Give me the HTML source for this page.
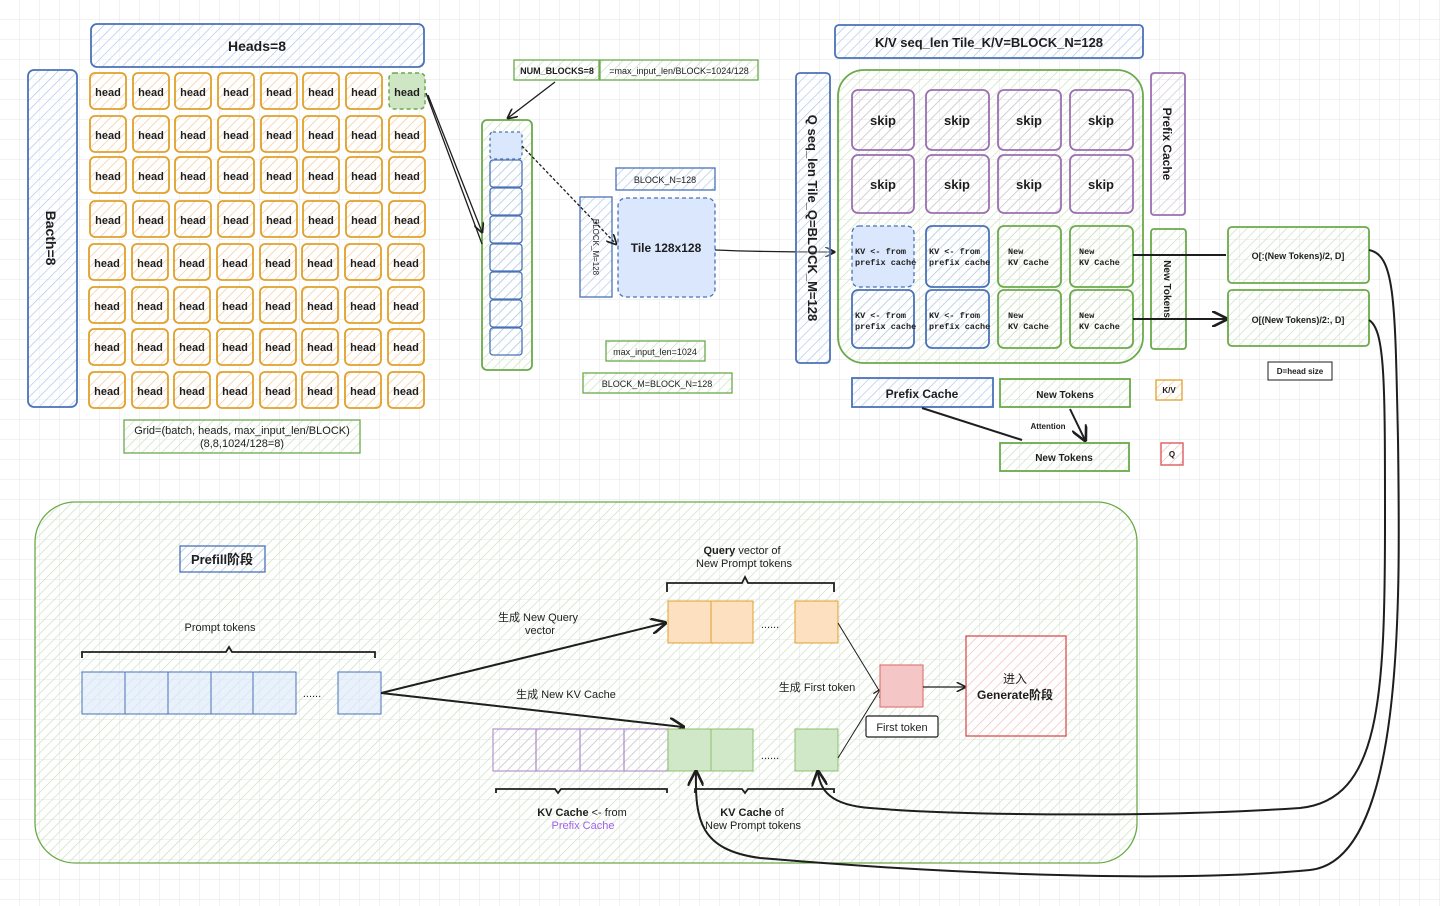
<!DOCTYPE html><html><head><meta charset="utf-8"><style>
html,body{margin:0;padding:0;background:#fff;}
svg{display:block;font-family:"Liberation Sans","Noto Sans CJK SC",sans-serif;}
text{fill:#1e1e1e;}
</style></head><body>
<svg width="1440" height="906" viewBox="0 0 1440 906" xmlns="http://www.w3.org/2000/svg">
<defs>
<pattern id="grid" width="20" height="20" patternUnits="userSpaceOnUse"><path d="M20 0V20M0 20H20" stroke="#e6e6e6" stroke-width="1" fill="none"/></pattern>
<pattern id="hb" width="7" height="7" patternUnits="userSpaceOnUse" patternTransform="rotate(45)"><rect width="7" height="7" fill="#fff" fill-opacity="0.3"/><line x1="0" y1="0" x2="0" y2="7" stroke="#a9c4ee" stroke-width="1.3"/></pattern>
<pattern id="ho" width="7" height="7" patternUnits="userSpaceOnUse" patternTransform="rotate(45)"><rect width="7" height="7" fill="#fff"/><line x1="0" y1="0" x2="0" y2="7" stroke="#f7c898" stroke-width="1.4"/></pattern>
<pattern id="hg" width="7" height="7" patternUnits="userSpaceOnUse" patternTransform="rotate(45)"><line x1="0" y1="0" x2="0" y2="7" stroke="#c6e0b8" stroke-width="1.3"/></pattern>
<pattern id="hp" width="7" height="7" patternUnits="userSpaceOnUse" patternTransform="rotate(45)"><line x1="0" y1="0" x2="0" y2="7" stroke="#cfc6d6" stroke-width="1.4"/></pattern>
<pattern id="hr" width="7" height="7" patternUnits="userSpaceOnUse" patternTransform="rotate(45)"><rect width="7" height="7" fill="#fff"/><line x1="0" y1="0" x2="0" y2="7" stroke="#f2b8b8" stroke-width="1.3"/></pattern>
<marker id="ar" markerWidth="8" markerHeight="8" refX="7" refY="4" orient="auto"><path d="M0 0L8 4L0 8" fill="none" stroke="#1e1e1e" stroke-width="1.3"/></marker>
</defs>
<rect width="1440" height="906" fill="url(#grid)"/>

<!-- Heads -->
<rect x="91" y="24" width="333" height="43" rx="6" fill="url(#hb)" stroke="#4a72b8" stroke-width="1.8"/>
<text x="257" y="51" text-anchor="middle" font-size="14" font-weight="bold">Heads=8</text>
<rect x="28" y="70" width="49" height="337" rx="6" fill="url(#hb)" stroke="#4a72b8" stroke-width="1.8"/>
<text transform="translate(46,238) rotate(90)" text-anchor="middle" font-size="14" font-weight="bold">Bacth=8</text>

<g stroke="#e0a02a" stroke-width="1.8" fill="url(#ho)">
<rect x="90" y="73" width="36" height="36" rx="5"/><rect x="133" y="73" width="36" height="36" rx="5"/><rect x="175" y="73" width="36" height="36" rx="5"/><rect x="218" y="73" width="36" height="36" rx="5"/><rect x="261" y="73" width="36" height="36" rx="5"/><rect x="303" y="73" width="36" height="36" rx="5"/><rect x="346" y="73" width="36" height="36" rx="5"/>
<rect x="90" y="116" width="36" height="36" rx="5"/><rect x="133" y="116" width="36" height="36" rx="5"/><rect x="175" y="116" width="36" height="36" rx="5"/><rect x="218" y="116" width="36" height="36" rx="5"/><rect x="261" y="116" width="36" height="36" rx="5"/><rect x="303" y="116" width="36" height="36" rx="5"/><rect x="346" y="116" width="36" height="36" rx="5"/><rect x="389" y="116" width="36" height="36" rx="5"/>
<rect x="90" y="157" width="36" height="36" rx="5"/><rect x="133" y="157" width="36" height="36" rx="5"/><rect x="175" y="157" width="36" height="36" rx="5"/><rect x="218" y="157" width="36" height="36" rx="5"/><rect x="261" y="157" width="36" height="36" rx="5"/><rect x="303" y="157" width="36" height="36" rx="5"/><rect x="346" y="157" width="36" height="36" rx="5"/><rect x="389" y="157" width="36" height="36" rx="5"/>
<rect x="90" y="201" width="36" height="36" rx="5"/><rect x="133" y="201" width="36" height="36" rx="5"/><rect x="175" y="201" width="36" height="36" rx="5"/><rect x="218" y="201" width="36" height="36" rx="5"/><rect x="261" y="201" width="36" height="36" rx="5"/><rect x="303" y="201" width="36" height="36" rx="5"/><rect x="346" y="201" width="36" height="36" rx="5"/><rect x="389" y="201" width="36" height="36" rx="5"/>
<rect x="89" y="244" width="36" height="36" rx="5"/><rect x="132" y="244" width="36" height="36" rx="5"/><rect x="174" y="244" width="36" height="36" rx="5"/><rect x="217" y="244" width="36" height="36" rx="5"/><rect x="260" y="244" width="36" height="36" rx="5"/><rect x="302" y="244" width="36" height="36" rx="5"/><rect x="345" y="244" width="36" height="36" rx="5"/><rect x="388" y="244" width="36" height="36" rx="5"/>
<rect x="89" y="287" width="36" height="36" rx="5"/><rect x="132" y="287" width="36" height="36" rx="5"/><rect x="174" y="287" width="36" height="36" rx="5"/><rect x="217" y="287" width="36" height="36" rx="5"/><rect x="260" y="287" width="36" height="36" rx="5"/><rect x="302" y="287" width="36" height="36" rx="5"/><rect x="345" y="287" width="36" height="36" rx="5"/><rect x="388" y="287" width="36" height="36" rx="5"/>
<rect x="89" y="329" width="36" height="36" rx="5"/><rect x="132" y="329" width="36" height="36" rx="5"/><rect x="174" y="329" width="36" height="36" rx="5"/><rect x="217" y="329" width="36" height="36" rx="5"/><rect x="260" y="329" width="36" height="36" rx="5"/><rect x="302" y="329" width="36" height="36" rx="5"/><rect x="345" y="329" width="36" height="36" rx="5"/><rect x="388" y="329" width="36" height="36" rx="5"/>
<rect x="89" y="372" width="36" height="36" rx="5"/><rect x="132" y="372" width="36" height="36" rx="5"/><rect x="174" y="372" width="36" height="36" rx="5"/><rect x="217" y="372" width="36" height="36" rx="5"/><rect x="260" y="372" width="36" height="36" rx="5"/><rect x="302" y="372" width="36" height="36" rx="5"/><rect x="345" y="372" width="36" height="36" rx="5"/><rect x="388" y="372" width="36" height="36" rx="5"/>
</g>
<rect x="389" y="73" width="36" height="36" rx="5" fill="#cfe6c4" stroke="#6aaa4a" stroke-width="1.5" stroke-dasharray="4 3"/>
<g font-size="11" text-anchor="middle" font-weight="bold">
<text x="108" y="96">head</text><text x="151" y="96">head</text><text x="193" y="96">head</text><text x="236" y="96">head</text><text x="279" y="96">head</text><text x="321" y="96">head</text><text x="364" y="96">head</text><text x="407" y="96">head</text>
<text x="108" y="139">head</text><text x="151" y="139">head</text><text x="193" y="139">head</text><text x="236" y="139">head</text><text x="279" y="139">head</text><text x="321" y="139">head</text><text x="364" y="139">head</text><text x="407" y="139">head</text>
<text x="108" y="180">head</text><text x="151" y="180">head</text><text x="193" y="180">head</text><text x="236" y="180">head</text><text x="279" y="180">head</text><text x="321" y="180">head</text><text x="364" y="180">head</text><text x="407" y="180">head</text>
<text x="108" y="224">head</text><text x="151" y="224">head</text><text x="193" y="224">head</text><text x="236" y="224">head</text><text x="279" y="224">head</text><text x="321" y="224">head</text><text x="364" y="224">head</text><text x="407" y="224">head</text>
<text x="107" y="267">head</text><text x="150" y="267">head</text><text x="192" y="267">head</text><text x="235" y="267">head</text><text x="278" y="267">head</text><text x="320" y="267">head</text><text x="363" y="267">head</text><text x="406" y="267">head</text>
<text x="107" y="310">head</text><text x="150" y="310">head</text><text x="192" y="310">head</text><text x="235" y="310">head</text><text x="278" y="310">head</text><text x="320" y="310">head</text><text x="363" y="310">head</text><text x="406" y="310">head</text>
<text x="107" y="351">head</text><text x="150" y="351">head</text><text x="192" y="351">head</text><text x="235" y="351">head</text><text x="278" y="351">head</text><text x="320" y="351">head</text><text x="363" y="351">head</text><text x="406" y="351">head</text>
<text x="107" y="395">head</text><text x="150" y="395">head</text><text x="192" y="395">head</text><text x="235" y="395">head</text><text x="278" y="395">head</text><text x="320" y="395">head</text><text x="363" y="395">head</text><text x="406" y="395">head</text>
</g>
<rect x="124" y="420" width="236" height="33" fill="url(#hg)" stroke="#6aaa4a" stroke-width="1.3"/>
<text x="242" y="434" text-anchor="middle" font-size="11">Grid=(batch, heads, max_input_len/BLOCK)</text>
<text x="242" y="447" text-anchor="middle" font-size="11">(8,8,1024/128=8)</text>

<!-- blocks column -->
<rect x="514" y="60" width="85" height="20" fill="url(#hg)" stroke="#6aaa4a" stroke-width="1.3"/>
<text x="557" y="74" text-anchor="middle" font-size="9" font-weight="bold">NUM_BLOCKS=8</text>
<rect x="600" y="60" width="158" height="20" fill="url(#hg)" stroke="#6aaa4a" stroke-width="1.3"/>
<text x="679" y="74" text-anchor="middle" font-size="9">=max_input_len/BLOCK=1024/128</text>
<rect x="482" y="120" width="50" height="250" rx="5" fill="url(#hg)" stroke="#6aaa4a" stroke-width="1.8"/>
<g fill="url(#hb)" stroke="#4a72b8" stroke-width="1.3">
<rect x="490" y="160" width="32" height="27" rx="3"/><rect x="490" y="188" width="32" height="27" rx="3"/><rect x="490" y="216" width="32" height="27" rx="3"/><rect x="490" y="244" width="32" height="27" rx="3"/><rect x="490" y="272" width="32" height="27" rx="3"/><rect x="490" y="300" width="32" height="27" rx="3"/><rect x="490" y="328" width="32" height="27" rx="3"/>
</g>
<rect x="490" y="132" width="32" height="27" rx="3" fill="#dbe7fc" stroke="#4a72b8" stroke-width="1.3" stroke-dasharray="3 3"/>
<path d="M555 82L508 118" stroke="#1e1e1e" stroke-width="1.3" marker-end="url(#ar)" fill="none"/>
<path d="M426 93L482 244M428 95L482 232" stroke="#1e1e1e" stroke-width="1.3" marker-end="url(#ar)" fill="none"/>

<rect x="616" y="168" width="99" height="22" fill="url(#hb)" stroke="#4a72b8" stroke-width="1.3"/>
<text x="665" y="183" text-anchor="middle" font-size="9">BLOCK_N=128</text>
<rect x="580" y="197" width="32" height="100" fill="url(#hb)" stroke="#4a72b8" stroke-width="1.3"/>
<text transform="translate(593,247) rotate(90)" text-anchor="middle" font-size="8">BLOCK_M=128</text>
<rect x="618" y="198" width="97" height="99" rx="8" fill="#dbe7fc" stroke="#4a72b8" stroke-width="1.3" stroke-dasharray="4 3"/>
<text x="666" y="252" text-anchor="middle" font-size="12" font-weight="bold">Tile 128x128</text>
<path d="M522 146L616 244" stroke="#1e1e1e" stroke-width="1.3" stroke-dasharray="3 2" marker-end="url(#ar)" fill="none"/>
<path d="M715 250Q760 252 834 252" stroke="#1e1e1e" stroke-width="1.3" marker-end="url(#ar)" fill="none"/>
<rect x="606" y="341" width="99" height="20" fill="url(#hg)" stroke="#6aaa4a" stroke-width="1.3"/>
<text x="655" y="355" text-anchor="middle" font-size="9">max_input_len=1024</text>
<rect x="583" y="373" width="149" height="20" fill="url(#hg)" stroke="#6aaa4a" stroke-width="1.3"/>
<text x="657" y="387" text-anchor="middle" font-size="9">BLOCK_M=BLOCK_N=128</text>

<!-- right matrix -->
<rect x="835" y="25" width="308" height="33" rx="4" fill="url(#hb)" stroke="#4a72b8" stroke-width="1.8"/>
<text x="989" y="47" text-anchor="middle" font-size="13" font-weight="bold">K/V seq_len Tile_K/V=BLOCK_N=128</text>
<rect x="796" y="73" width="34" height="290" rx="4" fill="url(#hb)" stroke="#4a72b8" stroke-width="1.8"/>
<text transform="translate(808,218) rotate(90)" text-anchor="middle" font-size="13" font-weight="bold">Q seq_len Tile_Q=BLOCK_M=128</text>
<rect x="838" y="70" width="305" height="293" rx="26" fill="url(#hg)" stroke="#6aaa4a" stroke-width="1.8"/>
<g fill="url(#hp)" stroke="#9b6fb0" stroke-width="1.8">
<rect x="852" y="90" width="62" height="60" rx="6"/><rect x="926" y="90" width="63" height="60" rx="6"/><rect x="998" y="90" width="63" height="60" rx="6"/><rect x="1070" y="90" width="63" height="60" rx="6"/>
<rect x="852" y="155" width="62" height="58" rx="6"/><rect x="926" y="155" width="63" height="58" rx="6"/><rect x="998" y="155" width="63" height="58" rx="6"/><rect x="1070" y="155" width="63" height="58" rx="6"/>
</g>
<g font-size="13" font-weight="bold" text-anchor="middle">
<text x="883" y="125">skip</text><text x="957" y="125">skip</text><text x="1029" y="125">skip</text><text x="1101" y="125">skip</text>
<text x="883" y="189">skip</text><text x="957" y="189">skip</text><text x="1029" y="189">skip</text><text x="1101" y="189">skip</text>
</g>
<rect x="852" y="226" width="62" height="61" rx="7" fill="#dbe7fc" stroke="#4a72b8" stroke-width="1.3" stroke-dasharray="4 3"/>
<g fill="url(#hb)" stroke="#4a72b8" stroke-width="1.8"><rect x="926" y="226" width="63" height="61" rx="6"/><rect x="852" y="290" width="62" height="58" rx="6"/><rect x="926" y="290" width="63" height="58" rx="6"/></g>
<g fill="url(#hg)" stroke="#6aaa4a" stroke-width="1.8"><rect x="998" y="226" width="63" height="61" rx="6"/><rect x="1070" y="226" width="63" height="61" rx="6"/><rect x="998" y="290" width="63" height="58" rx="6"/><rect x="1070" y="290" width="63" height="58" rx="6"/></g>
<g font-size="8.5" font-family="Liberation Mono,monospace" font-weight="bold">
<text x="855" y="254">KV &lt;- from</text><text x="855" y="265">prefix cache</text>
<text x="929" y="254">KV &lt;- from</text><text x="929" y="265">prefix cache</text>
<text x="855" y="318">KV &lt;- from</text><text x="855" y="329">prefix cache</text>
<text x="929" y="318">KV &lt;- from</text><text x="929" y="329">prefix cache</text>
<text x="1008" y="254">New</text><text x="1008" y="265">KV Cache</text>
<text x="1079" y="254">New</text><text x="1079" y="265">KV Cache</text>
<text x="1008" y="318">New</text><text x="1008" y="329">KV Cache</text>
<text x="1079" y="318">New</text><text x="1079" y="329">KV Cache</text>
</g>
<rect x="1151" y="73" width="34" height="142" rx="3" fill="url(#hp)" stroke="#9b6fb0" stroke-width="1.8"/>
<text transform="translate(1163,144) rotate(90)" text-anchor="middle" font-size="12" font-weight="bold">Prefix Cache</text>
<rect x="1151" y="229" width="35" height="120" rx="3" fill="url(#hg)" stroke="#6aaa4a" stroke-width="1.8"/>
<text transform="translate(1164,289) rotate(90)" text-anchor="middle" font-size="10" font-weight="bold">New Tokens</text>
<path d="M1133 255L1226 255M1133 319L1226 319" stroke="#1e1e1e" stroke-width="2" marker-end="url(#ar)" fill="none"/>
<rect x="1228" y="227" width="141" height="56" rx="4" fill="url(#hg)" stroke="#6aaa4a" stroke-width="1.8"/>
<text x="1298" y="259" text-anchor="middle" font-size="9" font-weight="bold">O[:(New Tokens)/2, D]</text>
<rect x="1228" y="290" width="141" height="56" rx="4" fill="url(#hg)" stroke="#6aaa4a" stroke-width="1.8"/>
<text x="1298" y="323" text-anchor="middle" font-size="9" font-weight="bold">O[(New Tokens)/2:, D]</text>
<rect x="1268" y="362" width="64" height="18" fill="#fff" stroke="#1e1e1e" stroke-width="1"/>
<text x="1300" y="374" text-anchor="middle" font-size="8" font-weight="bold">D=head size</text>

<rect x="852" y="378" width="141" height="29" fill="url(#hb)" stroke="#4a72b8" stroke-width="1.8"/>
<text x="922" y="398" text-anchor="middle" font-size="12" font-weight="bold">Prefix Cache</text>
<rect x="1000" y="379" width="130" height="28" fill="url(#hg)" stroke="#6aaa4a" stroke-width="1.8"/>
<text x="1065" y="398" text-anchor="middle" font-size="10" font-weight="bold">New Tokens</text>
<text x="1048" y="429" text-anchor="middle" font-size="8" font-weight="bold">Attention</text>
<path d="M922 408L1022 440M1070 409L1085 440" stroke="#1e1e1e" stroke-width="2" marker-end="url(#ar)" fill="none"/>
<rect x="1000" y="443" width="129" height="28" fill="url(#hg)" stroke="#6aaa4a" stroke-width="1.8"/>
<text x="1064" y="461" text-anchor="middle" font-size="10" font-weight="bold">New Tokens</text>
<rect x="1156" y="380" width="26" height="20" fill="url(#ho)" stroke="#e0a02a" stroke-width="1.3"/>
<text x="1169" y="393" text-anchor="middle" font-size="8" font-weight="bold">K/V</text>
<rect x="1161" y="443" width="22" height="22" fill="url(#hr)" stroke="#d95050" stroke-width="1.3"/>
<text x="1172" y="457" text-anchor="middle" font-size="8" font-weight="bold">Q</text>

<!-- bottom -->
<rect x="35" y="502" width="1102" height="361" rx="40" fill="url(#hg)" stroke="#6aaa4a" stroke-width="1.3"/>
<rect x="180" y="546" width="85" height="26" fill="url(#hb)" stroke="#4a72b8" stroke-width="1.3"/>
<text x="222" y="564" text-anchor="middle" font-size="13" font-weight="bold">Prefill阶段</text>
<text x="220" y="631" text-anchor="middle" font-size="11">Prompt tokens</text>
<path d="M82 658V652H226L229 647L232 652H375V658" stroke="#1e1e1e" stroke-width="1.8" fill="none"/>
<g fill="#dbe7fc" fill-opacity="0.6" stroke="#4a72b8" stroke-width="1"><rect x="82" y="672" width="43" height="42"/><rect x="125" y="672" width="43" height="42"/><rect x="168" y="672" width="43" height="42"/><rect x="211" y="672" width="42" height="42"/><rect x="253" y="672" width="43" height="42"/><rect x="338" y="672" width="43" height="42"/></g>
<text x="312" y="697" text-anchor="middle" font-size="11">......</text>

<text x="742" y="554" text-anchor="middle" font-size="11"><tspan font-weight="bold">Query</tspan> vector of</text>
<text x="744" y="567" text-anchor="middle" font-size="11">New Prompt tokens</text>
<path d="M667 592V583H742L745 577L748 583H834V592" stroke="#1e1e1e" stroke-width="1.8" fill="none"/>
<g fill="#fde0c0" stroke="#e0a02a" stroke-width="1"><rect x="668" y="601" width="43" height="42"/><rect x="711" y="601" width="42" height="42"/><rect x="795" y="601" width="43" height="42"/></g>
<text x="770" y="628" text-anchor="middle" font-size="11">......</text>
<text x="538" y="621" text-anchor="middle" font-size="11">生成 New Query</text>
<text x="540" y="634" text-anchor="middle" font-size="11">vector</text>
<text x="566" y="698" text-anchor="middle" font-size="11">生成 New KV Cache</text>
<text x="817" y="691" text-anchor="middle" font-size="11">生成 First token</text>
<path d="M381 693L665 623" stroke="#1e1e1e" stroke-width="2" marker-end="url(#ar)" fill="none"/>
<path d="M381 693L683 727" stroke="#1e1e1e" stroke-width="2" marker-end="url(#ar)" fill="none"/>
<g fill="url(#hp)" stroke="#b595cc" stroke-width="1.2"><rect x="493" y="729" width="43" height="42"/><rect x="536" y="729" width="44" height="42"/><rect x="580" y="729" width="44" height="42"/><rect x="624" y="729" width="44" height="42"/></g>
<g fill="#d0e8c8" stroke="#8cc070" stroke-width="1"><rect x="668" y="729" width="43" height="42"/><rect x="711" y="729" width="42" height="42"/><rect x="795" y="729" width="43" height="42"/></g>
<text x="770" y="759" text-anchor="middle" font-size="11">......</text>
<path d="M838 623L880 692M838 758L880 690" stroke="#1e1e1e" stroke-width="1" fill="none" marker-end="url(#ar)"/>
<rect x="880" y="665" width="43" height="42" fill="#f5c6c6" stroke="#e07a7a" stroke-width="1.2"/>
<path d="M923 687L965 687" stroke="#1e1e1e" stroke-width="1.2" marker-end="url(#ar)"/>
<rect x="866" y="716" width="72" height="21" rx="2" fill="#fff" stroke="#1e1e1e" stroke-width="1.2"/>
<text x="902" y="731" text-anchor="middle" font-size="11">First token</text>
<rect x="966" y="636" width="100" height="100" fill="url(#hr)" stroke="#d95050" stroke-width="1.3"/>
<text x="1015" y="683" text-anchor="middle" font-size="12">进入</text>
<text x="1015" y="699" text-anchor="middle" font-size="12" font-weight="bold">Generate阶段</text>
<path d="M496 793V789H555L558 793L561 789H667V793M695 793V789H742L745 793L748 789H834V793" stroke="#1e1e1e" stroke-width="1.8" fill="none"/>
<text x="582" y="816" text-anchor="middle" font-size="11"><tspan font-weight="bold">KV Cache</tspan> &lt;- from</text>
<text x="583" y="829" text-anchor="middle" font-size="11" style="fill:#a060f0">Prefix Cache</text>
<text x="752" y="816" text-anchor="middle" font-size="11"><tspan font-weight="bold">KV Cache</tspan> of</text>
<text x="753" y="829" text-anchor="middle" font-size="11">New Prompt tokens</text>

<!-- long curves -->
<path d="M1369 250C1395 255 1395 300 1398 440C1400 600 1405 860 1310 870C1150 885 900 870 760 858C700 850 695 820 696 772" stroke="#1e1e1e" stroke-width="2" fill="none" marker-end="url(#ar)"/>
<path d="M1369 320C1385 330 1385 380 1385 520C1385 700 1380 800 1300 808C1150 818 950 815 870 808C830 805 820 790 818 772" stroke="#1e1e1e" stroke-width="2" fill="none" marker-end="url(#ar)"/>
</svg>
</body></html>
